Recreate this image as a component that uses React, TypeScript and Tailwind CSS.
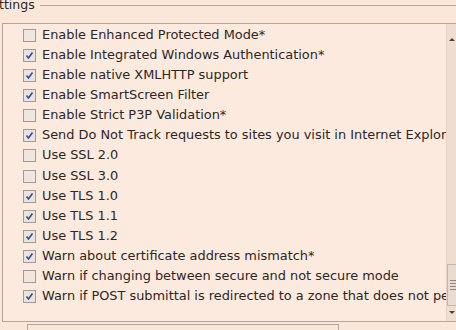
import React from "react";

const items: [string, boolean][] = [
  ["Enable Enhanced Protected Mode*", false],
  ["Enable Integrated Windows Authentication*", true],
  ["Enable native XMLHTTP support", true],
  ["Enable SmartScreen Filter", true],
  ["Enable Strict P3P Validation*", false],
  ["Send Do Not Track requests to sites you visit in Internet Explorer*", true],
  ["Use SSL 2.0", false],
  ["Use SSL 3.0", false],
  ["Use TLS 1.0", true],
  ["Use TLS 1.1", true],
  ["Use TLS 1.2", true],
  ["Warn about certificate address mismatch*", true],
  ["Warn if changing between secure and not secure mode", false],
  ["Warn if POST submittal is redirected to a zone that does not permit posts", true],
];

function Box({ checked }: { checked: boolean }) {
  return (
    <div
      className={`w-[13px] h-[13px] shrink-0 border border-[#a49a93] flex items-center justify-center ${
        checked ? "bg-[#ebe3de]" : "bg-[#efe6e0]"
      }`}
    >
      {checked && (
        <svg width="9" height="9" viewBox="0 0 9 9">
          <path d="M1.5 4.5 L3.5 7 L7.5 1.5" fill="none" stroke="#2f4b9c" strokeWidth="1.6" />
        </svg>
      )}
    </div>
  );
}

export default function App() {
  return (
    <div
      className="w-[456px] h-[330px] overflow-hidden bg-[#fbe7da] text-[#2b2725] flex flex-col"
      style={{ fontFamily: '"DejaVu Sans", Verdana, sans-serif' }}
    >
      <div className="h-[12px] flex items-center gap-[5px] shrink-0">
        <span className="text-[12.5px] leading-none -mt-[2px] -ml-[1px]">ttings</span>
        <div className="flex-1 h-px bg-[#b7a79c] -mt-[2px]" />
      </div>
      <div className="mt-[11px] ml-[2px] h-[299px] border-t border-l border-b border-[#b5a69b] bg-[#fdeadf] flex shrink-0">
        <div className="flex-1 overflow-hidden pt-[1px]">
          {items.map(([label, checked]) => (
            <div key={label} className="h-[20.15px] flex items-center pl-[20px] whitespace-nowrap">
              <Box checked={checked} />
              <span className="ml-[6px] text-[12.9px] leading-none">{label}</span>
            </div>
          ))}
        </div>
        <div className="w-[10px] shrink-0 bg-[#efddd1] border-l border-[#e6d2c5] flex flex-col items-end">
          <div className="mt-[14px] mr-[1px] w-0 h-0 border-l-[3px] border-r-[3px] border-b-[3px] border-l-transparent border-r-transparent border-b-[#4a4440]" />
          <div className="flex-1" />
          <div className="h-[42px] w-[9px] bg-[#e9dbd1] border border-[#c5b6ab] border-r-0 flex flex-col justify-center items-start gap-[2px] pl-[2px]">
            <div className="w-[7px] h-px bg-[#8f857e]" />
            <div className="w-[7px] h-px bg-[#8f857e]" />
            <div className="w-[7px] h-px bg-[#8f857e]" />
            <div className="w-[7px] h-px bg-[#8f857e]" />
          </div>
          <div className="mt-[5px] mb-[7px] mr-[1px] w-0 h-0 border-l-[3px] border-r-[3px] border-t-[3px] border-l-transparent border-r-transparent border-t-[#4a4440]" />
        </div>
      </div>
      <div className="mt-[2px] ml-[27px] w-[312px] flex-1 border-t border-l border-r border-[#b5a69b] bg-[#fbe7da]" />
    </div>
  );
}
